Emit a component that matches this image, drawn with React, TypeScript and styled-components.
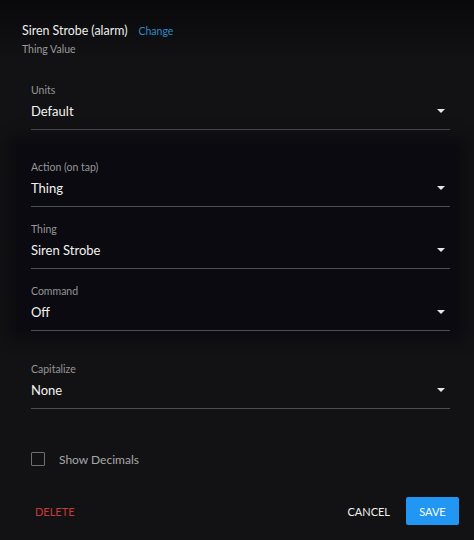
import React, { useState } from "react";
import styled, { createGlobalStyle } from "styled-components";

const GlobalStyle = createGlobalStyle`
  html, body {
    margin: 0;
    padding: 0;
    background: #121214;
  }
  body {
    font-family: Lato, "Noto Sans", "Liberation Sans", sans-serif;
    -webkit-font-smoothing: antialiased;
  }
`;

const Dialog = styled.div`
  width: 474px;
  height: 540px;
  box-sizing: border-box;
  display: flex;
  flex-direction: column;
  background: linear-gradient(180deg, #09090b 0px, #121214 60px, #121214 100%);
  color: #ececec;
  overflow: hidden;
`;

const Header = styled.div`
  padding: 21px 22px 0;
  display: flex;
  flex-direction: column;
`;

const TitleRow = styled.div`
  display: flex;
  align-items: baseline;
  gap: 11px;
  height: 19px;
`;

const Title = styled.span`
  font-size: 12.4px;
  line-height: 19px;
  color: #ededed;
`;

const ChangeLink = styled.a`
  font-size: 10.5px;
  color: #2b8cc4;
  cursor: pointer;
`;

const Subtitle = styled.div`
  font-size: 10.5px;
  line-height: 18px;
  color: #9a9a9a;
`;

const Section = styled.div<{ $shaded?: boolean; $gap: number }>`
  margin-top: ${(p) => p.$gap}px;
  margin-left: ${(p) => (p.$shaded ? "16px" : "0")};
  margin-right: ${(p) => (p.$shaded ? "16px" : "0")};
  padding-left: ${(p) => (p.$shaded ? "15px" : "31px")};
  padding-right: ${(p) => (p.$shaded ? "8px" : "24px")};
  background: ${(p) => (p.$shaded ? "#0a0a10" : "transparent")};
  box-shadow: ${(p) => (p.$shaded ? "0 0 14px 6px #0a0a10" : "none")};
`;

const Field = styled.div`
  padding-top: 15px;
  display: flex;
  flex-direction: column;
`;

const Label = styled.label`
  font-size: 10.5px;
  line-height: 14px;
  color: #969696;
`;

const SelectRow = styled.div`
  height: 28px;
  padding-bottom: 4px;
  display: flex;
  align-items: center;
  justify-content: space-between;
  border-bottom: 1px solid #4b4f56;
  cursor: pointer;
`;

const Value = styled.span`
  font-size: 13px;
  color: #f2f2f2;
`;

const Arrow = styled.span`
  width: 0;
  height: 0;
  margin-right: 5px;
  border-left: 4px solid transparent;
  border-right: 4px solid transparent;
  border-top: 4px solid #e6e6e6;
`;

const CheckRow = styled.label`
  margin-top: 38px;
  padding-left: 31px;
  height: 24px;
  display: flex;
  align-items: center;
  gap: 14px;
  cursor: pointer;
`;

const Box = styled.span<{ $checked: boolean }>`
  width: 12px;
  height: 12px;
  border: 1.5px solid #6f6f6f;
  border-radius: 1px;
  background: ${(p) => (p.$checked ? "#2196f3" : "transparent")};
`;

const CheckText = styled.span`
  font-size: 12px;
  color: #a8a8a8;
`;

const Footer = styled.div`
  margin-top: 26px;
  padding: 0 15px 0 27px;
  display: flex;
  align-items: center;
`;

const Spacer = styled.div`
  flex: 1;
`;

const TextButton = styled.button<{ $danger?: boolean }>`
  height: 28px;
  padding: 0 8px;
  background: transparent;
  border: none;
  font-family: inherit;
  font-size: 11px;
  color: ${(p) => (p.$danger ? "#c53a3a" : "#f0f0f0")};
  cursor: pointer;
`;

const SaveButton = styled.button`
  margin-left: 8px;
  height: 28px;
  width: 53px;
  background: #2196f3;
  border: none;
  border-radius: 2px;
  font-family: inherit;
  font-size: 11px;
  color: #ffffff;
  cursor: pointer;
`;

function Select({ label, value }: { label: string; value: string }) {
  return (
    <Field>
      <Label>{label}</Label>
      <SelectRow>
        <Value>{value}</Value>
        <Arrow />
      </SelectRow>
    </Field>
  );
}

export default function App() {
  const [decimals, setDecimals] = useState(false);

  return (
    <>
      <GlobalStyle />
      <Dialog>
        <Header>
          <TitleRow>
            <Title>Siren Strobe (alarm)</Title>
            <ChangeLink>Change</ChangeLink>
          </TitleRow>
          <Subtitle>Thing Value</Subtitle>
        </Header>

        <Section $gap={10}>
          <Select label="Units" value="Default" />
        </Section>

        <Section $shaded $gap={15}>
          <Select label="Action (on tap)" value="Thing" />
          <Select label="Thing" value="Siren Strobe" />
          <Select label="Command" value="Off" />
        </Section>

        <Section $gap={16}>
          <Select label="Capitalize" value="None" />
        </Section>

        <CheckRow onClick={() => setDecimals(!decimals)}>
          <Box $checked={decimals} />
          <CheckText>Show Decimals</CheckText>
        </CheckRow>

        <Footer>
          <TextButton $danger>DELETE</TextButton>
          <Spacer />
          <TextButton>CANCEL</TextButton>
          <SaveButton>SAVE</SaveButton>
        </Footer>
      </Dialog>
    </>
  );
}
